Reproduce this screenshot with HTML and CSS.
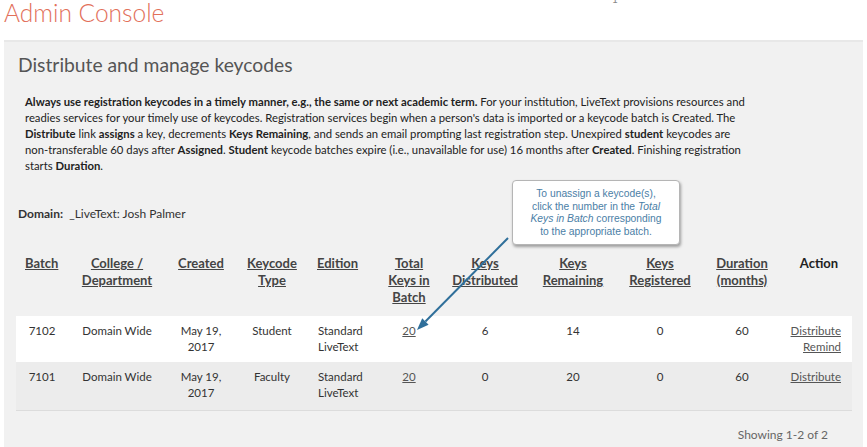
FILE: index.html
```html
<!DOCTYPE html>
<html>
<head>
<meta charset="utf-8">
<link rel="stylesheet" href="styles.css">
</head>
<body>
<header class="topbar">
  <h1 class="brand">Admin Console</h1>
  <span class="pager-mark">1</span>
</header>
<main class="panel">
  <h2 class="panel-title">Distribute and manage keycodes</h2>
  <p class="intro"><b>Always use registration keycodes in a timely manner, e.g., the same or next academic term.</b> For your institution, LiveText provisions resources and readies services for your timely use of keycodes. Registration services begin when a person's data is imported or a keycode batch is Created. The <b>Distribute</b> link <b>assigns</b> a key, decrements <b>Keys Remaining</b>, and sends an email prompting last registration step. Unexpired <b>student</b> keycodes are non&#8209;transferable 60 days after <b>Assigned</b>. <b>Student</b> keycode batches expire (i.e., unavailable for use) 16 months after <b>Created</b>. Finishing registration starts <b>Duration</b>.</p>
  <p class="domain"><b>Domain:</b>&nbsp; _LiveText: Josh Palmer</p>

  <div class="table-wrap">
    <table class="keys">
      <colgroup>
        <col style="width:52px"><col style="width:98px"><col style="width:70px"><col style="width:72px"><col style="width:64px"><col style="width:74px"><col style="width:78px"><col style="width:98px"><col style="width:76px"><col style="width:88px"><col style="width:66px">
      </colgroup>
      <thead>
        <tr>
          <th class="c-left"><a>Batch</a></th>
          <th><a>College /<br>Department</a></th>
          <th><a>Created</a></th>
          <th><a>Keycode<br>Type</a></th>
          <th class="c-left"><a>Edition</a></th>
          <th><a>Total<br>Keys in<br>Batch</a></th>
          <th><a>Keys<br>Distributed</a></th>
          <th><a>Keys<br>Remaining</a></th>
          <th><a>Keys<br>Registered</a></th>
          <th><a>Duration<br>(months)</a></th>
          <th class="plain">Action</th>
        </tr>
      </thead>
      <tbody>
        <tr class="row-white">
          <td>7102</td>
          <td>Domain Wide</td>
          <td>May 19,<br>2017</td>
          <td>Student</td>
          <td class="c-left">Standard<br>LiveText</td>
          <td><a>20</a></td>
          <td>6</td>
          <td>14</td>
          <td>0</td>
          <td>60</td>
          <td class="c-right"><a>Distribute</a><br><a>Remind</a></td>
        </tr>
        <tr class="row-grey">
          <td>7101</td>
          <td>Domain Wide</td>
          <td>May 19,<br>2017</td>
          <td>Faculty</td>
          <td class="c-left">Standard<br>LiveText</td>
          <td><a>20</a></td>
          <td>0</td>
          <td>20</td>
          <td>0</td>
          <td>60</td>
          <td class="c-right"><a>Distribute</a></td>
        </tr>
      </tbody>
    </table>

    <div class="callout">To unassign a keycode(s),<br>click the number in the <i>Total<br>Keys in Batch</i> corresponding<br>to the appropriate batch.</div>
    <svg class="arrow" width="120" height="110" viewBox="0 0 120 110">
      <line x1="112" y1="4" x2="29.4" y2="87.5" stroke="#2f6f9a" stroke-width="2"/>
      <polygon points="21,96 32.6,90.7 26.2,84.3" fill="#2f6f9a"/>
    </svg>
  </div>

  <div class="showing">Showing 1-2 of 2</div>
</main>
</body>
</html>
```

FILE: styles.css
```css
html, body {
  margin: 0;
  padding: 0;
  background: #ffffff;
}
body {
  font-family: Lato, "Open Sans", "Liberation Sans", sans-serif;
  color: #333;
}
.topbar {
  height: 40px;
  display: flex;
  align-items: flex-start;
  position: relative;
}
.brand {
  margin: -2px 0 0 4px;
  font-weight: 300;
  font-size: 24.5px;
  line-height: 30px;
  color: #e2705a;
}
.pager-mark {
  position: absolute;
  left: 612px;
  top: -7px;
  font-size: 10px;
  color: #888;
}
.panel {
  margin: 0 4px 0 4px;
  background: #f1f1f1;
  border-top: 2px solid #e8e8e8;
  padding: 11px 11px 0 14px;
  height: 420px;
  box-sizing: border-box;
}
.panel-title {
  margin: 0;
  font-weight: 400;
  font-size: 19.3px;
  line-height: 24px;
  color: #555;
}
.intro {
  margin: 17px 0 0 7px;
  width: 724px;
  font-size: 11.3px;
  line-height: 16px;
  color: #222;
}
.intro b { font-weight: 700; }
.domain {
  margin: 32px 0 0 0;
  font-size: 12px;
  line-height: 16px;
  color: #333;
}
.table-wrap {
  position: relative;
  margin: 32px 0 0 -2px;
}
.keys {
  border-collapse: collapse;
  table-layout: fixed;
  width: 836px;
}
.keys th {
  font-size: 13px;
  font-weight: 700;
  color: #444;
  line-height: 17px;
  padding: 1px 2px 10px;
  vertical-align: top;
  text-align: center;
}
.keys th a { text-decoration: underline; }
.keys th.plain { color: #222; }
.keys th.c-left { text-align: left; padding-left: 9px; }
.keys td {
  font-size: 11.5px;
  padding: 7px 4px 7px;
  line-height: 16px;
  vertical-align: top;
  text-align: center;
  color: #333;
}
.keys td.c-left { text-align: left; padding-left: 10px; }
.keys td.c-right { text-align: right; padding-right: 11px; }
.keys td a { color: #555; text-decoration: underline; }
.row-white { background: #ffffff; }
.row-grey { background: #ececec; border-bottom: 1px solid #dcdcdc; }
.row-grey td { padding-bottom: 9px; }
.callout {
  position: absolute;
  left: 496px;
  top: -74px;
  width: 168px;
  height: 65px;
  box-sizing: border-box;
  padding: 7px 2px 0;
  background: #fff;
  border: 1px solid #b5b5b5;
  border-radius: 4px;
  box-shadow: 1px 2px 3px rgba(0,0,0,0.35);
  font-family: "Liberation Sans", Arial, sans-serif;
  font-size: 10.3px;
  line-height: 12.5px;
  color: #4a7ea6;
  text-align: center;
}
.arrow {
  position: absolute;
  left: 380px;
  top: -20px;
  overflow: visible;
}
.showing {
  margin: 16px 24px 0 0;
  text-align: right;
  font-size: 12px;
  color: #666;
}
```
